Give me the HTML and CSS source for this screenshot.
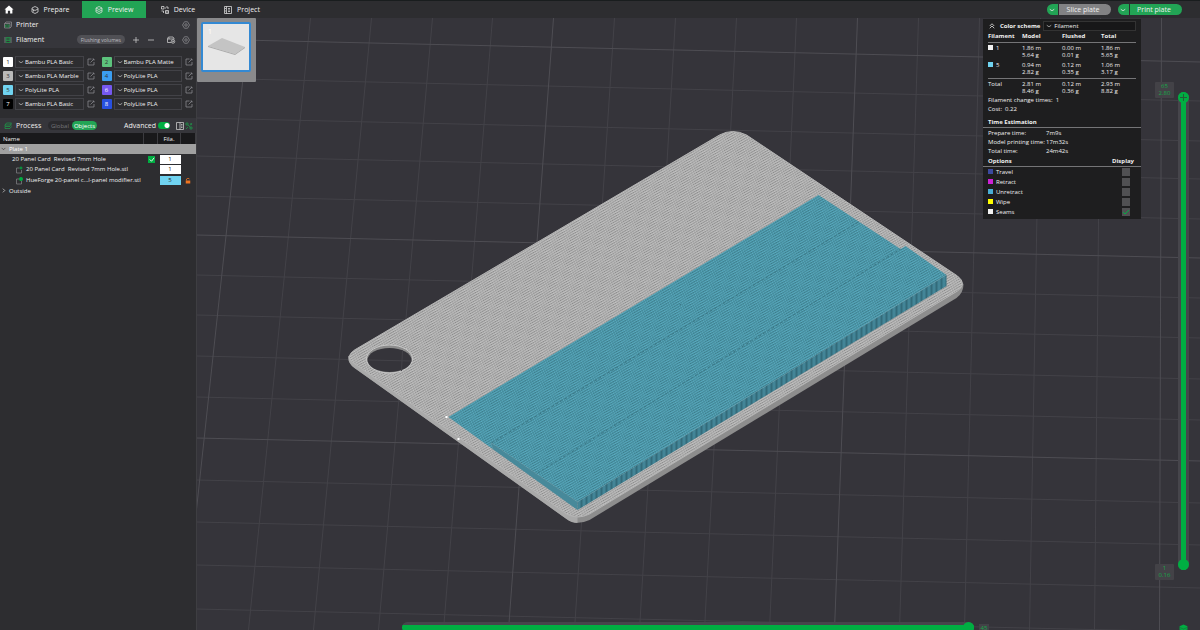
FILE: index.html
```
<!DOCTYPE html>
<html lang="en">

<head>
    <meta charset="UTF-8">
    <meta name="viewport" content="width=device-width, initial-scale=1.0">
    <title>Preview</title>
    <link rel="stylesheet" href="styles.css">
</head>

<body>
    <!-- shared icons -->
    <svg class="sprite" aria-hidden="true">
        <symbol id="gear" viewBox="0 0 16 16"><path d="M5 1.500h6L15 8l-4 6.500H5L1 8z" /><circle cx="8" cy="8" r="2.500" /></symbol>
        <symbol id="edit" viewBox="0 0 16 16"><path d="M9 2H2v12h12V8M7 9l7-7M11 2h3v3" /></symbol>
        <symbol id="cube" viewBox="0 0 16 16"><path d="M8 1l6 3v8l-6 3-6-3V4zM2 6l6 3 6-3M5 8v3" /></symbol>
        <symbol id="layers" viewBox="0 0 16 16"><path d="M8 1l6 3v8l-6 3-6-3V4zM2 4l6 3 6-3M2 8l6 3 6-3" /></symbol>
        <symbol id="part" viewBox="0 0 16 16"><path d="M9 4H3v10h10V8" /></symbol>
    </svg>

    <header class="topbar">
        <nav class="tabs">
            <button class="home" aria-label="Home"><svg viewBox="0 0 16 16"><path d="M8 1L0 8h2v7h4v-5h4v5h4V8h2z" /></svg></button>
            <button class="tab"><svg class="icon"><use href="#cube" /></svg>Prepare</button>
            <button class="tab active"><svg class="icon"><use href="#layers" /></svg>Preview</button>
            <button class="tab"><svg class="icon" viewBox="0 0 16 16"><path d="M1 1h5v5H1zM10 2h4v4M1 10h4v4M9 9h6v6H9zM9 12h6M10 4H8" /></svg>Device</button>
            <button class="tab"><svg class="icon" viewBox="0 0 16 16"><path d="M1 1h14v14H1zM5 1v14M8 5h4M8 8h4M8 11h4M2 5h2M2 10h2" /></svg>Project</button>
        </nav>
        <div class="actions">
            <div class="split">
                <button class="more" aria-label="Slice options"><svg viewBox="0 0 8 8"><path d="M1 3l3 2 3-2" /></svg></button>
                <button class="main disabled">Slice plate</button>
            </div>
            <div class="split">
                <button class="more" aria-label="Print options"><svg viewBox="0 0 8 8"><path d="M1 3l3 2 3-2" /></svg></button>
                <button class="main">Print plate</button>
            </div>
        </div>
    </header>

    <main class="workspace">
        <aside class="sidebar">
            <div class="section-title">
                <svg class="icon badge" viewBox="0 0 16 16"><path d="M1 5l3-3h11v9l-3 3H1zM1 5h11v9" /><path class="green" d="M3 8h7v4H3z" /></svg>
                <h2>Printer</h2>
                <button class="tool" aria-label="Printer settings"><svg class="icon"><use href="#gear" /></svg></button>
            </div>
            <div class="section-title">
                <svg class="icon badge" viewBox="0 0 16 16"><path d="M2 2v12M14 2v12" /><path class="green" d="M4 3h8v10H4zM4 6h8M4 9h8" /></svg>
                <h2>Filament</h2>
                <button class="flush">Flushing volumes</button>
                <button class="tool" aria-label="Add filament"><svg class="icon light" viewBox="0 0 16 16"><path d="M8 2v12M2 8h12" /></svg></button>
                <button class="tool" aria-label="Remove filament"><svg class="icon light" viewBox="0 0 16 16"><path d="M2 8h12" /></svg></button>
                <button class="tool sync" aria-label="Sync filaments"><svg class="icon light" viewBox="0 0 16 16"><path d="M8 13H1V5l2-3h9l2 3v2M1 6h13M4 3v3" /><circle cx="12" cy="11" r="3.500" /><path d="M10 11l2 1 2-2" /></svg></button>
                <button class="tool" aria-label="Filament settings"><svg class="icon"><use href="#gear" /></svg></button>
            </div>

            <div class="filaments">
                <div class="filament">
                    <span class="swatch c1">1</span>
                    <select aria-label="Filament 1"><option>Bambu PLA Basic</option></select>
                    <button class="tool" aria-label="Edit filament 1"><svg class="icon"><use href="#edit" /></svg></button>
                </div>
                <div class="filament">
                    <span class="swatch c2">2</span>
                    <select aria-label="Filament 2"><option>Bambu PLA Matte</option></select>
                    <button class="tool" aria-label="Edit filament 2"><svg class="icon"><use href="#edit" /></svg></button>
                </div>
                <div class="filament">
                    <span class="swatch c3">3</span>
                    <select aria-label="Filament 3"><option>Bambu PLA Marble</option></select>
                    <button class="tool" aria-label="Edit filament 3"><svg class="icon"><use href="#edit" /></svg></button>
                </div>
                <div class="filament">
                    <span class="swatch c4">4</span>
                    <select aria-label="Filament 4"><option>PolyLite PLA</option></select>
                    <button class="tool" aria-label="Edit filament 4"><svg class="icon"><use href="#edit" /></svg></button>
                </div>
                <div class="filament">
                    <span class="swatch c5">5</span>
                    <select aria-label="Filament 5"><option>PolyLite PLA</option></select>
                    <button class="tool" aria-label="Edit filament 5"><svg class="icon"><use href="#edit" /></svg></button>
                </div>
                <div class="filament">
                    <span class="swatch c6">6</span>
                    <select aria-label="Filament 6"><option>PolyLite PLA</option></select>
                    <button class="tool" aria-label="Edit filament 6"><svg class="icon"><use href="#edit" /></svg></button>
                </div>
                <div class="filament">
                    <span class="swatch c7">7</span>
                    <select aria-label="Filament 7"><option>Bambu PLA Basic</option></select>
                    <button class="tool" aria-label="Edit filament 7"><svg class="icon"><use href="#edit" /></svg></button>
                </div>
                <div class="filament">
                    <span class="swatch c8">8</span>
                    <select aria-label="Filament 8"><option>PolyLite PLA</option></select>
                    <button class="tool" aria-label="Edit filament 8"><svg class="icon"><use href="#edit" /></svg></button>
                </div>
            </div>

            <div class="section-title process">
                <svg class="icon badge" viewBox="0 0 16 16"><path class="green" d="M5 2h10l-3 4H2zM2 6v3h10l3-4M2 10v3h10l3-4" /></svg>
                <h2>Process</h2>
                <div class="scope">
                    <button>Global</button>
                    <button class="on">Objects</button>
                </div>
                <label class="advanced">Advanced<input type="checkbox" checked></label>
                <button class="tool" aria-label="Compare presets"><svg class="icon light" viewBox="0 0 16 16"><path d="M1 1h14v14H1zM8 1v14M10 5h3M10 8h3M10 11h3" /></svg></button>
                <button class="tool" aria-label="Parameter table"><svg class="icon" viewBox="0 0 16 16"><path class="green" d="M2 2h4v4H2zM10 3l4 3M14 2l-4 5M6 6l5 5M2 14l4-4M10 10h4v4h-4z" /></svg></button>
            </div>

            <table class="objects">
                <thead>
                    <tr>
                        <th class="name">Name</th>
                        <th class="check"></th>
                        <th class="fila">Fila.</th>
                        <th class="lock"></th>
                    </tr>
                </thead>
                <tbody>
                    <tr class="plate">
                        <td colspan="4"><svg class="arrow" viewBox="0 0 8 8"><path d="M1 3l3 3 3-3" /></svg>Plate 1</td>
                    </tr>
                    <tr>
                        <td class="level1">20 Panel Card&nbsp; Revised 7mm Hole</td>
                        <td><input type="checkbox" class="printable" aria-label="Printable" checked></td>
                        <td><span class="slot">1</span></td>
                        <td></td>
                    </tr>
                    <tr class="sub">
                        <td class="level2"><svg class="icon part" viewBox="0 0 16 16"><use href="#part" /><path class="plus" d="M12 1v6M9 4h6" /></svg>20 Panel Card&nbsp; Revised 7mm Hole.stl</td>
                        <td></td>
                        <td><span class="slot">1</span></td>
                        <td></td>
                    </tr>
                    <tr class="sub">
                        <td class="level2"><svg class="icon part" viewBox="0 0 16 16"><use href="#part" /><circle class="dot" cx="12" cy="4" r="4" /></svg>HueForge 20-panel c...l-panel modifier.stl</td>
                        <td></td>
                        <td><span class="slot blue">5</span></td>
                        <td><svg class="padlock" viewBox="0 0 8 8"><path d="M1 4h6v4H1z" /><path class="shackle" d="M2 4V2q2-2 4 0" /></svg></td>
                    </tr>
                    <tr>
                        <td colspan="4"><svg class="arrow" viewBox="0 0 8 8"><path d="M3 1l3 3-3 3" /></svg>Outside</td>
                    </tr>
                </tbody>
            </table>
        </aside>

        <section class="viewport">
            <svg class="scene" viewBox="196 18 1004 612" preserveAspectRatio="xMidYMid slice">
                <defs>
                    <pattern id="grayFill" width="2.200" height="2.200" patternUnits="userSpaceOnUse" patternTransform="rotate(-31)">
                        <path fill="#c2c2c2" d="M0 0h3v3H0z" />
                        <path fill="#8a8a8a" d="M0 0h3v.9H0z" />
                        <path fill="#adadad" d="M0 0h.8v3H0z" />
                    </pattern>
                    <pattern id="blueFill" width="2.200" height="2.200" patternUnits="userSpaceOnUse" patternTransform="rotate(-31)">
                        <path fill="#5aabbf" d="M0 0h3v3H0z" />
                        <path fill="#3b7a89" d="M0 0h3v.9H0z" />
                        <path fill="#4993a5" d="M0 0h.8v3H0z" />
                    </pattern>
                    <pattern id="ribs" width="5" height="5" patternUnits="userSpaceOnUse">
                        <path fill="#438597" d="M0 0h5v5H0z" />
                        <path fill="#336b7a" d="M0 0h2v5H0z" />
                    </pattern>
                </defs>
                <!-- bed grid -->
                <path class="grid" d="M196 78l1004 23M196 118l1004 23M196 156l1004 23M196 196l1004 23M196 275l1004 23M196 315l1004 23M196 356l1004 23M196 397l1004 23M196 480l1004 23M196 522l1004 23M196 565l1004 23M196 609l1004 23
                    M310 18L248 630M371 18L313 630M432 18L378 630M492 18L443 630M614 18L574 630M675 18L639 630M736 18L704 630M796 18L769 630M918 18L899 630M979 18L964 630M1040 18L1029 630M1100 18L1094 630" />
                <path class="grid major" d="M196 39l1004 23M196 235l1004 23M196 438l1004 23M249 18L183 630M553 18L508 630M857 18L834 630M1161 18L1159 630" />
                <!-- card -->
                <path fill="#8d8d8d" d="M348 356Q347 363 354 368L566 519Q576 526 589 520L956 298Q963 293 963 284L733 140z" />
                <path fill="#a9a9a9" d="M348 356Q347 363 354 368L566 519Q571 523 577 523V510z" />
                <path fill="url(#grayFill)" stroke="#b4b4b4" d="M354 350L719 135Q732 128 746 135L957 276Q967 284 957 291L589 514Q577 520 566 514L353 363Q344 357 354 350z" />
                <!-- key ring hole -->
                <ellipse class="rim" fill="#8c8c8c" cx="389" cy="359" rx="23" ry="14" />
                <ellipse fill="#35343a" cx="389" cy="360" rx="22" ry="12" />
                <path class="grid" d="M368 360l43 1M402 350L401 371" />
                <!-- raised panels -->
                <path fill="url(#blueFill)" d="M448 417L818 195L900 249L905 246L946 275L577 502L491 443L492 449z" />
                <path fill="#47899a" d="M491 443L577 502V510L492 449z" />
                <path fill="url(#ribs)" d="M577 502L946 275V286L577 510z" />
                <path class="seam" d="M491 443L858 222M537 473L900 249" />
                <path fill="#fff" d="M445 416h2v2h-2zM457 438h2v2h-2z" />
            </svg>

            <div class="thumb">
                <svg viewBox="0 0 46 46">
                    <path fill="#c4c4c4" d="M5 22l14-8 23 9-10 7z" />
                    <path fill="#aaa" d="M5 22l27 8 10-7v1l-10 7-27-8z" />
                    <text x="5" y="10">1</text>
                </svg>
            </div>

            <section class="legend">
                <div class="scheme">
                    <svg class="collapse" viewBox="0 0 8 8"><path d="M1 4l3-3 3 3M1 7l3-3 3 3" /></svg>
                    <label for="scheme">Color scheme</label>
                    <select id="scheme"><option>Filament</option></select>
                </div>
                <table class="usage">
                    <thead>
                        <tr><th>Filament</th><th>Model</th><th>Flushed</th><th>Total</th></tr>
                    </thead>
                    <tbody>
                        <tr><td><i class="key white"></i>1</td><td>1.86 m<br>5.64 g</td><td>0.00 m<br>0.01 g</td><td>1.86 m<br>5.65 g</td></tr>
                        <tr><td><i class="key cyan"></i>5</td><td>0.94 m<br>2.82 g</td><td>0.12 m<br>0.35 g</td><td>1.06 m<br>3.17 g</td></tr>
                    </tbody>
                    <tfoot>
                        <tr><td>Total</td><td>2.81 m<br>8.46 g</td><td>0.12 m<br>0.36 g</td><td>2.93 m<br>8.82 g</td></tr>
                    </tfoot>
                </table>
                <p>Filament change times:&nbsp; 1</p>
                <p>Cost:&nbsp; 0.22</p>
                <h3>Time Estimation</h3>
                <dl class="times">
                    <dt>Prepare time:</dt><dd>7m9s</dd>
                    <dt>Model printing time:</dt><dd>17m32s</dd>
                    <dt>Total time:</dt><dd>24m42s</dd>
                </dl>
                <h3 class="options-title"><span>Options</span><span>Display</span></h3>
                <div class="options">
                    <label><i class="key travel"></i>Travel<input type="checkbox"></label>
                    <label><i class="key retract"></i>Retract<input type="checkbox"></label>
                    <label><i class="key unretract"></i>Unretract<input type="checkbox"></label>
                    <label><i class="key wipe"></i>Wipe<input type="checkbox"></label>
                    <label><i class="key white"></i>Seams<input type="checkbox" checked></label>
                </div>
            </section>

            <div class="layer-slider">
                <input type="range" class="low" aria-label="Lowest layer" min="1" max="65" value="1">
                <input type="range" class="high" aria-label="Highest layer" min="1" max="65" value="65">
                <output class="tip top">65<br>2.80</output>
                <output class="tip bottom">1<br>0.16</output>
            </div>
            <div class="move-slider">
                <input type="range" aria-label="Move" min="0" max="45" value="45">
                <output>45</output>
            </div>
            <button class="layers-btn" aria-label="Layers"><svg viewBox="0 0 16 16"><path d="M8 1l7 3v9l-7 3-7-3V4z" /><path class="cut" d="M1 6l7 3 7-3M1 10l7 3 7-3" /></svg></button>
        </section>
    </main>
</body>

</html>
```
FILE: styles.css
```
* {
    box-sizing: border-box;
}

body {
    margin: 0;
    height: 100vh;
    display: flex;
    flex-direction: column;
    overflow: hidden;
    background: #2d2d30;
    color: #f0f0f0;
    font-family: "Open Sans", "Noto Sans", sans-serif;
    font-size: 6px;
    line-height: 8px;
}

h2,
h3,
p,
dl,
dd {
    margin: 0;
    font-size: inherit;
}

button,
select,
input {
    margin: 0;
    padding: 0;
    border: 0;
    background: none;
    color: inherit;
    font: inherit;
    appearance: none;
}

svg {
    display: block;
    flex: none;
    fill: none;
    stroke: currentColor;
    overflow: visible;
}

.sprite {
    position: absolute;
    width: 0;
    height: 0;
}

.icon {
    width: 8px;
    height: 8px;
    color: #8c8c90;
    stroke-width: 1.5;
}

.icon.light {
    color: #d0d0d0;
}

.green {
    stroke: #1f9a4a;
}

/* top bar */
.topbar {
    height: 18px;
    flex: none;
    display: flex;
    justify-content: space-between;
    border-top: 1px solid #191d1e;
    background: #2d2d30;
    font-size: 7px;
}

.tabs,
.actions,
.split {
    display: flex;
    align-items: stretch;
}

.home {
    width: 18px;
    padding: 4px;
}

.home svg {
    width: 10px;
    height: 9px;
    fill: #fff;
    stroke: none;
}

.tab {
    width: 64px;
    display: flex;
    align-items: center;
    justify-content: center;
    gap: 5px;
}

.tab .icon {
    color: #e0e0e0;
}

.tab.active {
    background: #22a455;
}

.actions {
    gap: 7px;
    padding: 3px 18px 3px 0;
}

.split {
    gap: 1px;
}

.more {
    width: 11px;
    padding: 2px;
    border-radius: 6px 0 0 6px;
    background: #22a455;
}

.more svg {
    width: 6px;
    height: 6px;
}

.main {
    width: 52px;
    padding-right: 4px;
    border-radius: 0 6px 6px 0;
    background: #22a455;
    line-height: 11px;
}

.main.disabled {
    background: #828284;
}

.workspace {
    flex: 1;
    display: flex;
    min-height: 0;
}

/* sidebar */
.sidebar {
    width: 197px;
    flex: none;
    border-right: 1px solid #3e3e42;
}

.section-title {
    height: 15px;
    display: flex;
    align-items: center;
    padding: 0 6px 2px 4px;
    background: #36363b;
    font-size: 7px;
}

.section-title h2 {
    margin: 0 auto 0 4px;
    font-weight: normal;
}

.flush {
    height: 9px;
    margin-right: 7px;
    padding: 0 4px;
    border-radius: 5px;
    background: #505055;
    color: #bdbdc0;
    font-size: 5px;
}

.section-title .tool + .tool {
    margin-left: 7px;
}

.section-title .sync.tool {
    margin-left: 12px;
}

.filaments {
    display: grid;
    grid-template-columns: 1fr 1fr;
    column-gap: 7px;
    padding: 7px 3px;
}

.filament {
    height: 14px;
    display: flex;
    align-items: center;
}

.swatch {
    width: 10px;
    height: 10px;
    border-radius: 1px;
    color: #333;
    line-height: 10px;
    text-align: center;
}

.c1 { background: #fff; }
.c2 { background: #5cc37c; }
.c3 { background: #b9b9b9; }
.c4 { background: #3b9df0; }
.c5 { background: #70d3f0; }
.c6 { background: #7558ef; color: #fff; }
.c7 { background: #000; color: #fff; }
.c8 { background: #2850df; color: #fff; }

select {
    background: url("data:image/svg+xml,%3Csvg xmlns='http://www.w3.org/2000/svg' viewBox='0 0 8 8'%3E%3Cpath d='M1 3l3 2 3-2' fill='none' stroke='%23bbb'/%3E%3C/svg%3E") no-repeat 2px center / 6px 6px;
    border: 1px solid #424247;
}

.filament select {
    flex: 1;
    min-width: 0;
    height: 12px;
    margin: 0 3px 0 2px;
    padding-left: 9px;
}

.process {
    padding-right: 3px;
    padding-bottom: 0;
}

.scope {
    display: flex;
    margin-right: 27px;
    border-radius: 5px;
    background: #2a2a2d;
    font-size: 6px;
}

.scope button {
    height: 9px;
    padding: 0 2px;
    border-radius: 5px;
    color: #76767a;
}

.scope button:first-child {
    padding: 0 3px;
}

.scope .on {
    background: #22a455;
    color: #fff;
}

.advanced {
    display: flex;
    align-items: center;
    gap: 2px;
    margin-right: 6px;
}

.advanced input {
    width: 12px;
    height: 7px;
    border-radius: 4px;
    background: radial-gradient(circle at 9px 50%, #fff 2px, #00ae42 3px);
}

.process .tool + .tool {
    margin-left: 1px;
}

.objects {
    width: 100%;
    table-layout: fixed;
    border-collapse: collapse;
}

.objects th {
    height: 11px;
    padding: 0 3px;
    border-right: 1px solid #3c3c40;
    background: #19191b;
    font-weight: normal;
    text-align: left;
}

.objects .check { width: 14px; }
.objects .fila { width: 23px; text-align: center; }
.objects .lock { width: 15px; }

.objects td {
    height: 10px;
    padding: 0;
    white-space: nowrap;
}

.objects .sub td {
    height: 11px;
}

.plate td {
    background: #a0a0a0;
    color: #fff;
}

.arrow {
    display: inline-block;
    width: 5px;
    height: 5px;
    margin: 0 3px 0 1px;
}

.plate .arrow {
    color: #333;
}

.objects .level1 {
    padding-left: 12px;
}

.objects .level2 {
    padding-left: 15px;
}

.part {
    display: inline-block;
    margin-right: 3px;
    vertical-align: middle;
    color: #808084;
}

.plus {
    stroke: #00ae42;
    stroke-width: 2;
}

.dot {
    fill: #00ae42;
    stroke: none;
}

.printable {
    display: block;
    width: 7px;
    height: 7px;
    margin-left: 4px;
    background: #00ae42 url("data:image/svg+xml,%3Csvg xmlns='http://www.w3.org/2000/svg' viewBox='0 0 8 8'%3E%3Cpath d='M2 4l2 2 3-4' fill='none' stroke='%23fff'/%3E%3C/svg%3E");
}

.slot {
    display: block;
    height: 9px;
    margin: 0 0 0 2px;
    background: #fff;
    color: #222;
    line-height: 9px;
    text-align: center;
}

.slot.blue {
    background: #70d3f0;
}

.padlock {
    width: 6px;
    height: 7px;
    margin: auto;
    fill: #ee7420;
    stroke: none;
}

.shackle {
    fill: none;
    stroke: #ee7420;
}

/* 3D view */
.viewport {
    position: relative;
    flex: 1;
    overflow: hidden;
    background: #35343a;
}

.scene {
    position: absolute;
    inset: 0;
    width: 100%;
    height: 100%;
    stroke: none;
}

.grid {
    stroke: #434248;
}

.grid.major {
    stroke: #4e4d53;
}

.rim {
    stroke: #c8c8c8;
}

.seam {
    stroke: #3b7988;
    stroke-dasharray: 3 2;
}

.thumb {
    position: absolute;
    top: 0;
    left: 0;
    padding: 4px 5px 10px 4px;
    border-radius: 1px;
    background: #8a8a8c;
}

.thumb svg {
    width: 50px;
    height: 50px;
    border: 2px solid #3389d3;
    border-radius: 2px;
    background: #e6e6e6;
    stroke: none;
}

.thumb text {
    fill: #fff;
    font-size: 7px;
}

/* legend */
.legend {
    position: absolute;
    top: 1px;
    right: 59px;
    width: 158px;
    padding: 2px 5px;
    background: #1e1e1f;
}

.scheme {
    display: flex;
    align-items: center;
    font-weight: bold;
}

.collapse {
    width: 6px;
    height: 6px;
    margin: 0 5px 0 1px;
}

.scheme select {
    flex: 1;
    height: 10px;
    margin-left: 3px;
    padding-left: 10px;
    border-color: #333;
    background-color: #171718;
    font-weight: normal;
}

.usage {
    width: 100%;
    table-layout: fixed;
    border-collapse: collapse;
    line-height: 7px;
}

.usage th {
    height: 11px;
    padding: 0;
    border-bottom: 1px solid #757577;
    text-align: left;
}

.usage th:first-child { width: 34px; }
.usage th:nth-child(2) { width: 40px; }
.usage th:nth-child(3) { width: 39px; }

.usage td {
    padding: 2px 0 1px;
    vertical-align: top;
}

.usage tbody tr:last-child td {
    padding-bottom: 2px;
}

.usage tfoot td {
    border-top: 1px solid #757577;
}

.key {
    display: inline-block;
    width: 5px;
    height: 5px;
    margin-right: 3px;
}

.white { background: #f2f2f2; }
.cyan { background: #70d3f0; }
.travel { background: #3b4aa0; }
.retract { background: #cd22d6; }
.unretract { background: #49aed4; }
.wipe { background: #ffff00; }

.legend p {
    line-height: 9px;
}

.legend h3 {
    margin: 3px -5px 1px;
    padding: 0 5px;
    border-bottom: 1px solid #757577;
    line-height: 10px;
}

.times {
    display: grid;
    grid-template-columns: 58px 1fr;
    line-height: 9px;
}

.legend .options-title {
    display: flex;
    justify-content: space-between;
    margin: 0 -5px;
    padding-right: 7px;
}

.options label {
    height: 10px;
    display: flex;
    align-items: center;
}

.options input {
    width: 8px;
    height: 8px;
    margin: 0 6px 0 auto;
    background: #505052;
}

.options input:checked {
    background: #505052 url("data:image/svg+xml,%3Csvg xmlns='http://www.w3.org/2000/svg' viewBox='0 0 8 8'%3E%3Cpath d='M1 4l2 2 4-4' fill='none' stroke='%2300ae42'/%3E%3C/svg%3E");
}

/* sliders */
.layer-slider {
    position: absolute;
    top: 74px;
    bottom: 60px;
    right: 11px;
    display: grid;
}

.layer-slider input {
    grid-area: 1 / 1;
    width: 11px;
    height: 100%;
    writing-mode: vertical-lr;
    direction: rtl;
}

.layer-slider .low {
    border-radius: 6px;
    background: linear-gradient(90deg, #46454b 3px, #00ae42 3px 8px, #46454b 8px);
}

.layer-slider .high {
    pointer-events: none;
}

input[type="range"]::-webkit-slider-thumb {
    width: 11px;
    height: 11px;
    border-radius: 50%;
    background: #00ae42;
    appearance: none;
    pointer-events: auto;
}

.layer-slider .high::-webkit-slider-thumb {
    background: #00ae42 url("data:image/svg+xml,%3Csvg xmlns='http://www.w3.org/2000/svg' viewBox='0 0 11 11'%3E%3Cpath d='M5.500 2v7M2 5.500h7' stroke='%23245c38'/%3E%3C/svg%3E");
}

.tip {
    position: absolute;
    right: 15px;
    width: 19px;
    padding: 1px 0;
    border-radius: 1px;
    background: #434247;
    color: #16a848;
    line-height: 7px;
    text-align: center;
}

.tip.top {
    top: -10px;
}

.tip.bottom {
    bottom: -10px;
}

.move-slider {
    position: absolute;
    left: 205px;
    right: 211px;
    bottom: -3px;
    display: flex;
    align-items: center;
    gap: 5px;
}

.move-slider input {
    flex: 1;
    height: 11px;
    background: linear-gradient(#46454b 3px, #00ae42 3px 8px, #46454b 8px);
    border-radius: 6px;
}

.move-slider output {
    width: 10px;
    background: #434247;
    color: #16a848;
    text-align: center;
}

.layers-btn {
    position: absolute;
    right: 12px;
    bottom: -3px;
}

.layers-btn svg {
    width: 9px;
    height: 9px;
    fill: #00ae42;
    stroke: none;
}

.layers-btn .cut {
    fill: none;
    stroke: #245c38;
}
```
